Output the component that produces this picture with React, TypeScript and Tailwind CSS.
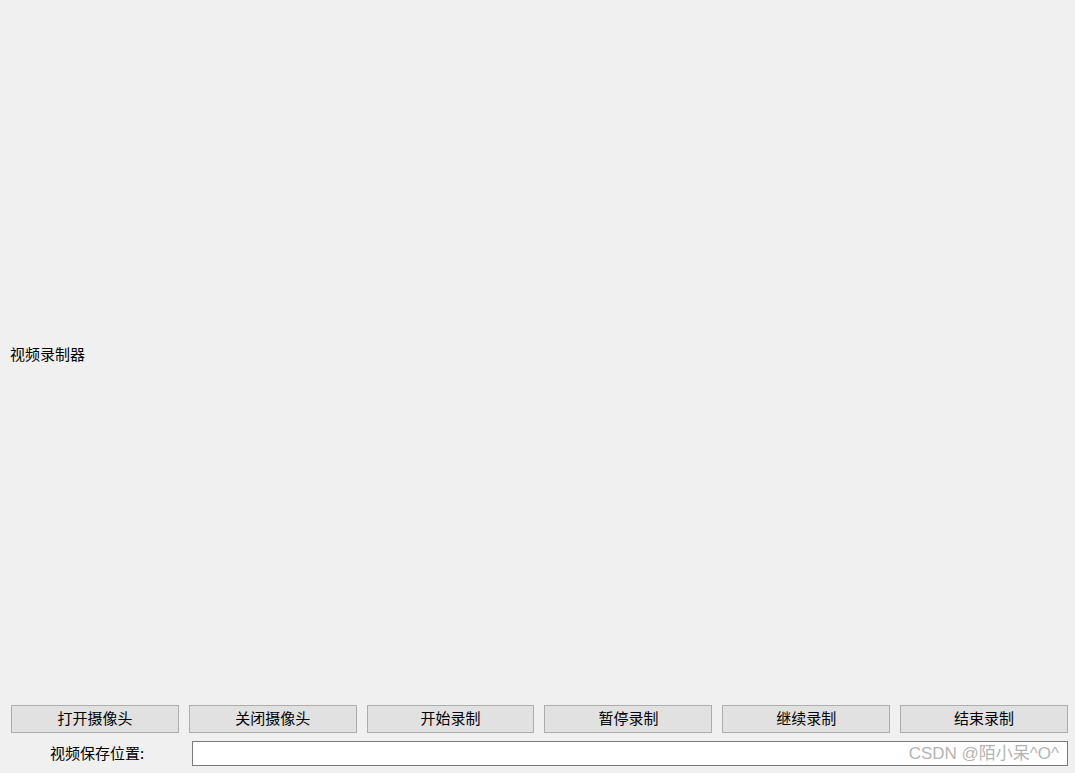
const buttons = ["打开摄像头", "关闭摄像头", "开始录制", "暂停录制", "继续录制", "结束录制"];

const font = { fontFamily: '"Noto Sans CJK SC", "Liberation Sans", sans-serif' };

export default function App() {
  return (
    <div
      className="flex h-[773px] w-full flex-col bg-[#f0f0f0] text-[14px] text-black"
      style={font}
    >
      {/* video preview area with title label */}
      <div className="flex h-[705px] items-center pl-[10px] pt-[1px]">
        <span className="leading-none text-[15px]">视频录制器</span>
      </div>

      {/* control buttons */}
      <div className="grid h-[28px] grid-cols-6 gap-[10px] pl-[11px] pr-[7px]">
        {buttons.map((label) => (
          <button
            key={label}
            className="border border-[#adadad] bg-[#e1e1e1] pb-[3px] text-[15px] leading-none"
          >
            {label}
          </button>
        ))}
      </div>

      {/* save location */}
      <div className="mt-[8px] flex h-[25px] pl-[11px] pr-[7px]">
        <div className="flex w-[167px] items-center justify-center pb-[2px] pl-[5px] text-[15px] leading-none">
          视频保存位置:
        </div>
        <div className="ml-[14px] flex flex-1 items-center justify-end border border-[#7a7a7a] bg-white pr-[8px]">
          <span
            className="text-[17px] leading-none text-[#b4b4b4]"
            style={{ fontFamily: '"Liberation Sans", "Noto Sans CJK SC", sans-serif' }}
          >
            CSDN @陌小呆^O^
          </span>
        </div>
      </div>
    </div>
  );
}
